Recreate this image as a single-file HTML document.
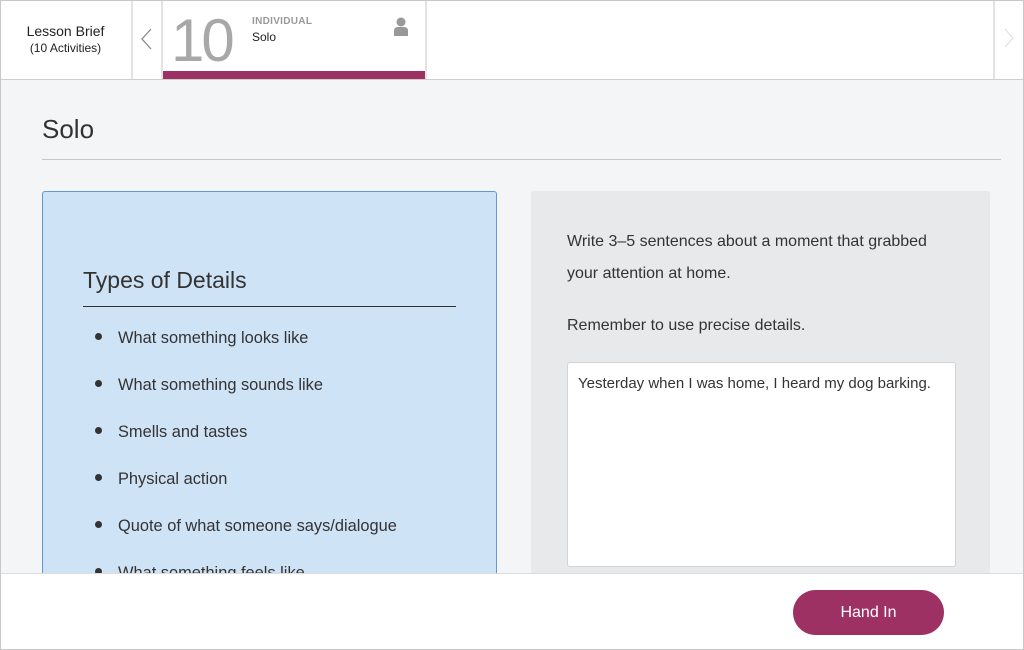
<!DOCTYPE html>
<html><head><meta charset="utf-8"><style>
*{box-sizing:border-box;margin:0;padding:0}
body{width:1024px;height:650px;overflow:hidden;font-family:"Liberation Sans",sans-serif;background:#f4f5f7;position:relative;color:#333}
.frame{position:absolute;inset:0;border:1px solid #c8c8c8;pointer-events:none;z-index:10}
.hdr{position:absolute;left:0;top:0;width:1024px;height:80px;background:#fff;border-bottom:1px solid #cfcfcf}
.brief{position:absolute;left:0;top:0;width:133px;height:79px;border-right:2px solid #e3e3e3;text-align:center;padding-top:23px}
.brief .a{font-size:14px;color:#222}
.brief .b{font-size:12px;color:#222;margin-top:2px}
.tab{position:absolute;left:161px;top:0;width:266px;height:79px;border-left:2px solid #e3e3e3;border-right:2px solid #e3e3e3}
.tab .num{position:absolute;left:8px;top:6px;font-size:60px;color:#a8a8a8;font-weight:300;letter-spacing:-3px}
.tab .ind{position:absolute;left:89px;top:16px;font-size:10px;color:#999;font-weight:bold;letter-spacing:.3px}
.tab .solo{position:absolute;left:89px;top:30px;font-size:12px;color:#222}
.tab .bar{position:absolute;left:0;right:0;bottom:0;height:8px;background:#9d3163}
.next{position:absolute;left:993px;top:0;width:31px;height:79px;border-left:2px solid #e3e3e3}
h1{position:absolute;left:42px;top:114px;font-size:26px;font-weight:normal;color:#333}
.hr{position:absolute;left:42px;top:159px;width:959px;height:1px;background:#c8c8c8}
.left{position:absolute;left:42px;top:191px;width:455px;height:420px;background:#cfe3f7;border:1px solid #5f9ad8;border-radius:3px}
.left h2{position:absolute;left:40px;top:75px;font-size:23px;font-weight:normal;color:#333}
.left .ln{position:absolute;left:40px;top:114px;width:373px;height:1px;background:#333}
.left ul{position:absolute;left:52px;top:137px;list-style:none}
.left li{font-size:16.4px;height:47px;color:#333;position:relative;padding-left:23px}
.left li:before{content:"";position:absolute;left:0;top:4px;width:7px;height:7px;border-radius:50%;background:#333}
.right{position:absolute;left:531px;top:191px;width:459px;height:400px;background:#e8e9eb;border-radius:3px}
.right p{position:absolute;left:36px;font-size:16px;color:#333;line-height:32px}
.ta{position:absolute;left:36px;top:171px;width:389px;height:205px;background:#fff;border:1px solid #d3d3d3;border-radius:3px;padding:12px 10px;font-size:15px;color:#333}
.foot{position:absolute;left:0;top:573px;width:1024px;height:77px;background:#fff;border-top:1px solid #ddd}
.btn{position:absolute;left:793px;top:16px;width:151px;height:45px;border-radius:23px;background:#9d3163;color:#fff;font-size:16px;text-align:center;line-height:45px}
</style></head><body>
<div class="hdr">
<div class="brief"><div class="a">Lesson Brief</div><div class="b">(10 Activities)</div></div>
<svg style="position:absolute;left:140px;top:28px" width="12" height="22" viewBox="0 0 12 22"><path d="M11 1 L2 11 L11 21" fill="none" stroke="#888" stroke-width="1.3"/></svg>
<div class="tab"><div class="num">10</div><div class="ind">INDIVIDUAL</div><div class="solo">Solo</div>
<svg style="position:absolute;left:230px;top:17px" width="16" height="20" viewBox="0 0 16 20"><circle cx="8" cy="5" r="4.5" fill="#999"/><path d="M1 19 V14 Q1 10 5 10 H11 Q15 10 15 14 V19 Z" fill="#999"/></svg>
<div class="bar"></div></div>
<div class="next"><svg style="position:absolute;left:9px;top:28px" width="10" height="20" viewBox="0 0 10 20"><path d="M1 1 L9 10 L1 19" fill="none" stroke="#e0e0e0" stroke-width="1.2"/></svg></div>
</div>
<h1>Solo</h1><div class="hr"></div>
<div class="left"><h2>Types of Details</h2><div class="ln"></div>
<ul><li>What something looks like</li><li>What something sounds like</li><li>Smells and tastes</li><li>Physical action</li><li>Quote of what someone says/dialogue</li><li>What something feels like</li></ul></div>
<div class="right"><p style="top:35px">Write 3–5 sentences about a moment that grabbed<br>your attention at home.</p>
<p style="top:119px">Remember to use precise details.</p>
<div class="ta">Yesterday when I was home, I heard my dog barking.</div></div>
<div class="foot"><div class="btn">Hand In</div></div>
<div class="frame"></div>
</body></html>
